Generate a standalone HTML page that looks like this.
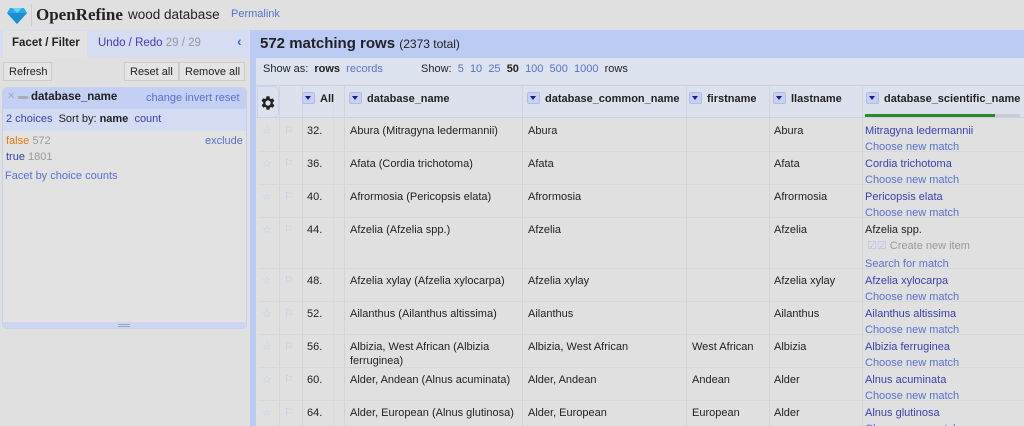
<!DOCTYPE html>
<html><head><meta charset="utf-8"><style>
*{box-sizing:border-box;margin:0;padding:0}
html,body{width:1024px;height:426px;overflow:hidden}
body{background:#e0e0e0;font-family:"Liberation Sans",Arial,sans-serif;font-size:11px;color:#222;position:relative}
.a{position:absolute;white-space:nowrap}
.lk{color:#3a3fb0}
.lk2{color:#5a70d0}
.g{color:#999}
.btn{position:absolute;top:62px;height:19px;border:1px solid #ccc;background:#e4e4e4;font-size:11px;padding:3px 5px;color:#222;white-space:nowrap}
.row{position:absolute;left:258px;right:0;border-bottom:1px solid #d8d8d8}
.c{position:absolute;top:5px;line-height:14px;white-space:nowrap}
.vl{position:absolute;top:85px;bottom:0;width:1px;background:#d4d4d4}
.dd{display:inline-block;width:13px;height:12px;background:#c8d2f0;border:1px solid #b0bde8;border-radius:2px;vertical-align:-2px;margin-right:5px;position:relative}
.dd:after{content:"";position:absolute;left:2px;top:3px;border:3px solid transparent;border-top:4px solid #1a1aa0}
.hd{position:absolute;top:92px;font-weight:bold;font-size:11px;white-space:nowrap}
</style></head><body>
<svg class="a" style="left:6px;top:7px" width="22" height="18" viewBox="0 0 22 18"><polygon points="4,1 18,1 21,6 11,17 1,6" fill="#2aa9e8"/><polygon points="1,6 21,6 11,17" fill="#1c8fd0"/><polygon points="6,1 11,6 16,1" fill="#6fd0f5"/></svg>
<div class="a" style="left:31px;top:4px;width:1px;height:22px;background:#ccc"></div>
<div class="a" style="left:36px;top:5px;font-family:'Liberation Serif',serif;font-weight:bold;font-size:17px">OpenRefine</div>
<div class="a" style="left:128px;top:7px;font-size:13.5px">wood database</div>
<div class="a lk2" style="left:231px;top:8px;font-size:11px">Permalink</div>
<div class="a" style="left:0;top:30px;width:250px;height:28px;background:#d6ddf2"></div>
<div class="a" style="left:3px;top:31px;width:84px;height:27px;background:#e2e2e2"></div>
<div class="a" style="left:12px;top:37px;font-weight:bold;font-size:11.5px">Facet / Filter</div>
<div class="a lk" style="left:98px;top:37px;font-size:11.5px">Undo / Redo <span class="g">29 / 29</span></div>
<div class="a" style="left:237px;top:33px;color:#3a6fd0;font-weight:bold;font-size:14px">‹</div>
<div class="btn" style="left:3px;width:49px">Refresh</div>
<div class="btn" style="left:124px;width:55px">Reset all</div>
<div class="btn" style="left:179px;width:66px">Remove all</div>
<div class="a" style="left:2px;top:87px;width:245px;height:242px;border:1px solid #c6d0ee;border-radius:5px;background:#e2e2e2;overflow:hidden">
 <div style="height:21px;background:#c3cff3"></div>
 <div style="height:22px;background:#d4dcf3"></div>
 <div style="position:absolute;bottom:0;left:0;right:0;height:6px;background:#cdd6f0"></div>
</div>
<div class="a" style="left:7px;top:91px;color:#aab;font-size:10px">✕ ▬</div>
<div class="a" style="left:31px;top:91px;font-weight:bold;font-size:11.5px">database_name</div>
<div class="a lk2" style="left:146px;top:92px">change invert reset</div>
<div class="a" style="left:6px;top:113px"><span class="lk">2 choices</span> &nbsp;Sort by: <b>name</b> &nbsp;<span class="lk">count</span></div>
<div class="a" style="left:6px;top:135px"><span style="color:#e07a10">false</span> <span class="g">572</span></div>
<div class="a lk2" style="left:205px;top:135px">exclude</div>
<div class="a" style="left:6px;top:151px"><span class="lk">true</span> <span class="g">1801</span></div>
<div class="a lk2" style="left:5px;top:170px">Facet by choice counts</div>
<div class="a" style="left:118px;top:324px;width:12px;height:3px;border-top:1px solid #9ab;border-bottom:1px solid #9ab"></div>
<div class="a" style="left:250px;top:30px;width:6px;height:396px;background:#bccbf3"></div>
<div class="a" style="left:256px;top:30px;right:0;height:28px;background:#bccbf3"></div>
<div class="a" style="left:260px;top:35px;font-size:15px;font-weight:bold">572 matching rows <span style="font-weight:normal;font-size:12px">(2373 total)</span></div>
<div class="a" style="left:256px;top:58px;right:0;height:26px;background:#dde2ef"></div>
<div class="a" style="left:263px;top:63px">Show as: &nbsp;<b>rows</b> &nbsp;<span class="lk2">records</span></div>
<div class="a" style="left:421px;top:63px">Show: &nbsp;<span class="lk2">5</span> &nbsp;<span class="lk2">10</span> &nbsp;<span class="lk2">25</span> &nbsp;<b>50</b> &nbsp;<span class="lk2">100</span> &nbsp;<span class="lk2">500</span> &nbsp;<span class="lk2">1000</span> &nbsp;rows</div>
<div class="a" style="left:256px;top:85px;right:0;height:33px;background:#dde1ee;border-top:1px solid #c8d2f0;border-bottom:1px solid #c8d2f0"></div>
<div class="a" style="left:257px;top:86px;width:22px;height:32px;border:1px solid #c8d2f0;border-radius:0 6px 6px 0"></div>
<svg class="a" style="left:259px;top:94px" width="18" height="18" viewBox="0 0 24 24"><path fill="#222" d="M19.4 13a7.5 7.5 0 0 0 0-2l2.1-1.6-2-3.5-2.5 1a7 7 0 0 0-1.7-1L15 3h-4l-.4 2.6a7 7 0 0 0-1.7 1l-2.5-1-2 3.5L6.6 11a7.5 7.5 0 0 0 0 2l-2.1 1.6 2 3.5 2.5-1a7 7 0 0 0 1.7 1L11 21h4l.4-2.6a7 7 0 0 0 1.7-1l2.5 1 2-3.5zM13 15.5a3.5 3.5 0 1 1 0-7 3.5 3.5 0 0 1 0 7z" transform="translate(-1 0)"/></svg>
<div class="vl" style="left:279px"></div><div class="vl" style="left:302px"></div><div class="vl" style="left:333px;background:#dadada"></div><div class="vl" style="left:344px"></div><div class="vl" style="left:522px"></div><div class="vl" style="left:686px"></div><div class="vl" style="left:769px"></div><div class="vl" style="left:862px"></div>
<div class="hd" style="left:302px"><span class="dd"></span>All</div>
<div class="hd" style="left:349px"><span class="dd"></span>database_name</div>
<div class="hd" style="left:527px"><span class="dd"></span>database_common_name</div>
<div class="hd" style="left:689px"><span class="dd"></span>firstname</div>
<div class="hd" style="left:773px"><span class="dd"></span>llastname</div>
<div class="hd" style="left:866px"><span class="dd"></span>database_scientific_name</div>
<div class="a" style="left:865px;top:114px;width:155px;height:3px;background:#ccc"></div>
<div class="a" style="left:865px;top:114px;width:130px;height:3px;background:#2a8a2a"></div>

<div class="row" style="top:119px;height:33px"><div class="c" style="left:4px;color:#c0cbee">☆</div><div class="c" style="left:26px;color:#c0cbee">⚐</div><div class="c" style="left:49px">32.</div><div class="c" style="left:92px">Abura (Mitragyna ledermannii)</div><div class="c" style="left:270px">Abura</div><div class="c" style="left:516px">Abura</div><div class="c lk" style="left:607px">Mitragyna ledermannii</div><div class="c lk2" style="left:607px;top:21px">Choose new match</div></div>
<div class="row" style="top:152px;height:33px"><div class="c" style="left:4px;color:#c0cbee">☆</div><div class="c" style="left:26px;color:#c0cbee">⚐</div><div class="c" style="left:49px">36.</div><div class="c" style="left:92px">Afata (Cordia trichotoma)</div><div class="c" style="left:270px">Afata</div><div class="c" style="left:516px">Afata</div><div class="c lk" style="left:607px">Cordia trichotoma</div><div class="c lk2" style="left:607px;top:21px">Choose new match</div></div>
<div class="row" style="top:185px;height:33px"><div class="c" style="left:4px;color:#c0cbee">☆</div><div class="c" style="left:26px;color:#c0cbee">⚐</div><div class="c" style="left:49px">40.</div><div class="c" style="left:92px">Afrormosia (Pericopsis elata)</div><div class="c" style="left:270px">Afrormosia</div><div class="c" style="left:516px">Afrormosia</div><div class="c lk" style="left:607px">Pericopsis elata</div><div class="c lk2" style="left:607px;top:21px">Choose new match</div></div>
<div class="row" style="top:218px;height:51px"><div class="c" style="left:4px;color:#c0cbee">☆</div><div class="c" style="left:26px;color:#c0cbee">⚐</div><div class="c" style="left:49px">44.</div><div class="c" style="left:92px">Afzelia (Afzelia spp.)</div><div class="c" style="left:270px">Afzelia</div><div class="c" style="left:516px">Afzelia</div><div class="c" style="left:607px">Afzelia spp.</div><div class="c g" style="left:609px;top:21px"><span style="color:#b0c0e8">☑☑</span> Create new item</div><div class="c lk2" style="left:607px;top:39px">Search for match</div></div>
<div class="row" style="top:269px;height:33px"><div class="c" style="left:4px;color:#c0cbee">☆</div><div class="c" style="left:26px;color:#c0cbee">⚐</div><div class="c" style="left:49px">48.</div><div class="c" style="left:92px">Afzelia xylay (Afzelia xylocarpa)</div><div class="c" style="left:270px">Afzelia xylay</div><div class="c" style="left:516px">Afzelia xylay</div><div class="c lk" style="left:607px">Afzelia xylocarpa</div><div class="c lk2" style="left:607px;top:21px">Choose new match</div></div>
<div class="row" style="top:302px;height:33px"><div class="c" style="left:4px;color:#c0cbee">☆</div><div class="c" style="left:26px;color:#c0cbee">⚐</div><div class="c" style="left:49px">52.</div><div class="c" style="left:92px">Ailanthus (Ailanthus altissima)</div><div class="c" style="left:270px">Ailanthus</div><div class="c" style="left:516px">Ailanthus</div><div class="c lk" style="left:607px">Ailanthus altissima</div><div class="c lk2" style="left:607px;top:21px">Choose new match</div></div>
<div class="row" style="top:335px;height:33px"><div class="c" style="left:4px;color:#c0cbee">☆</div><div class="c" style="left:26px;color:#c0cbee">⚐</div><div class="c" style="left:49px">56.</div><div class="c" style="left:92px">Albizia, West African (Albizia<br>ferruginea)</div><div class="c" style="left:270px">Albizia, West African</div><div class="c" style="left:434px">West African</div><div class="c" style="left:516px">Albizia</div><div class="c lk" style="left:607px">Albizia ferruginea</div><div class="c lk2" style="left:607px;top:21px">Choose new match</div></div>
<div class="row" style="top:368px;height:33px"><div class="c" style="left:4px;color:#c0cbee">☆</div><div class="c" style="left:26px;color:#c0cbee">⚐</div><div class="c" style="left:49px">60.</div><div class="c" style="left:92px">Alder, Andean (Alnus acuminata)</div><div class="c" style="left:270px">Alder, Andean</div><div class="c" style="left:434px">Andean</div><div class="c" style="left:516px">Alder</div><div class="c lk" style="left:607px">Alnus acuminata</div><div class="c lk2" style="left:607px;top:21px">Choose new match</div></div>
<div class="row" style="top:401px;height:33px"><div class="c" style="left:4px;color:#c0cbee">☆</div><div class="c" style="left:26px;color:#c0cbee">⚐</div><div class="c" style="left:49px">64.</div><div class="c" style="left:92px">Alder, European (Alnus glutinosa)</div><div class="c" style="left:270px">Alder, European</div><div class="c" style="left:434px">European</div><div class="c" style="left:516px">Alder</div><div class="c lk" style="left:607px">Alnus glutinosa</div><div class="c lk2" style="left:607px;top:21px">Choose new match</div></div>
</body></html>
